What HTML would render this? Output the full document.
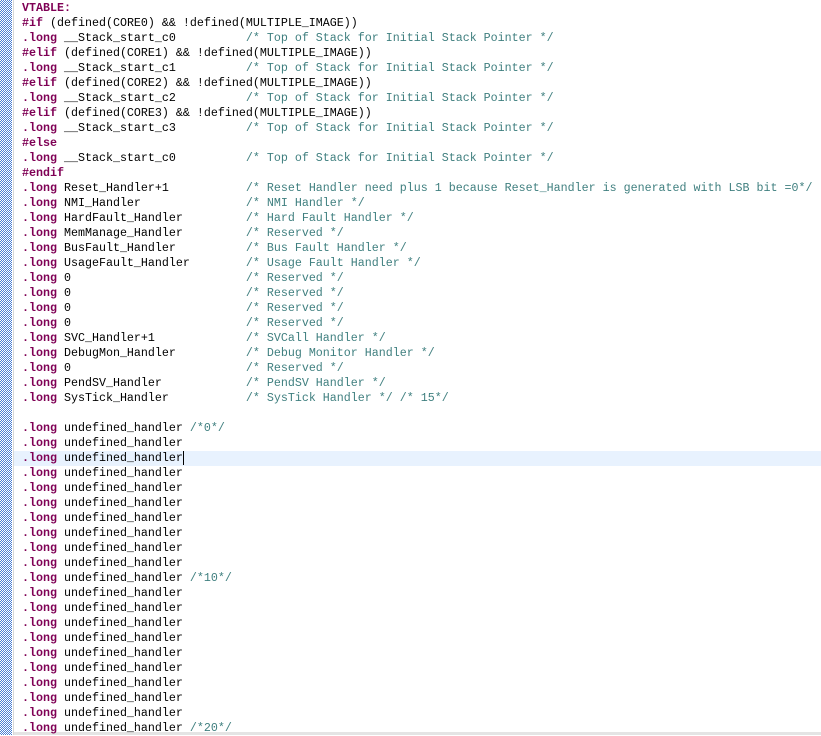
<!DOCTYPE html>
<html><head><meta charset="utf-8"><style>
html,body{margin:0;padding:0;background:#fff;width:821px;height:735px;overflow:hidden}
.g{position:absolute;left:0;top:0;width:12px;height:735px;
background-image:repeating-conic-gradient(#4a7fd4 0 25%,#fff 0 50%);background-size:2px 2px;}
.gl{position:absolute;left:13px;top:0;width:1px;height:735px;background:#d8d8d8}
.hl{position:absolute;left:14px;top:451px;width:807px;height:15px;background:#e8f2fe}
.bt{position:absolute;left:14px;top:732px;width:807px;height:3px;background:#e4e4e4}
pre{position:absolute;left:22px;top:1px;margin:0;font-family:"Liberation Mono",monospace;font-size:11.67px;line-height:15px;color:#000}
.k{color:#7f0055;font-weight:bold}
.c{color:#3f7f7f}
.cur{display:inline-block;width:1px;height:14px;background:#000;vertical-align:top}
</style></head><body>
<div class="g"></div><div class="gl"></div><div class="hl"></div><div class="bt"></div>
<pre><span class="k">VTABLE:</span>
<span class="k">#if</span> (defined(CORE0) &amp;&amp; !defined(MULTIPLE_IMAGE))
<span class="k">.long</span> __Stack_start_c0          <span class="c">/* Top of Stack for Initial Stack Pointer */</span>
<span class="k">#elif</span> (defined(CORE1) &amp;&amp; !defined(MULTIPLE_IMAGE))
<span class="k">.long</span> __Stack_start_c1          <span class="c">/* Top of Stack for Initial Stack Pointer */</span>
<span class="k">#elif</span> (defined(CORE2) &amp;&amp; !defined(MULTIPLE_IMAGE))
<span class="k">.long</span> __Stack_start_c2          <span class="c">/* Top of Stack for Initial Stack Pointer */</span>
<span class="k">#elif</span> (defined(CORE3) &amp;&amp; !defined(MULTIPLE_IMAGE))
<span class="k">.long</span> __Stack_start_c3          <span class="c">/* Top of Stack for Initial Stack Pointer */</span>
<span class="k">#else</span>
<span class="k">.long</span> __Stack_start_c0          <span class="c">/* Top of Stack for Initial Stack Pointer */</span>
<span class="k">#endif</span>
<span class="k">.long</span> Reset_Handler+1           <span class="c">/* Reset Handler need plus 1 because Reset_Handler is generated with LSB bit =0*/</span>
<span class="k">.long</span> NMI_Handler               <span class="c">/* NMI Handler */</span>
<span class="k">.long</span> HardFault_Handler         <span class="c">/* Hard Fault Handler */</span>
<span class="k">.long</span> MemManage_Handler         <span class="c">/* Reserved */</span>
<span class="k">.long</span> BusFault_Handler          <span class="c">/* Bus Fault Handler */</span>
<span class="k">.long</span> UsageFault_Handler        <span class="c">/* Usage Fault Handler */</span>
<span class="k">.long</span> 0                         <span class="c">/* Reserved */</span>
<span class="k">.long</span> 0                         <span class="c">/* Reserved */</span>
<span class="k">.long</span> 0                         <span class="c">/* Reserved */</span>
<span class="k">.long</span> 0                         <span class="c">/* Reserved */</span>
<span class="k">.long</span> SVC_Handler+1             <span class="c">/* SVCall Handler */</span>
<span class="k">.long</span> DebugMon_Handler          <span class="c">/* Debug Monitor Handler */</span>
<span class="k">.long</span> 0                         <span class="c">/* Reserved */</span>
<span class="k">.long</span> PendSV_Handler            <span class="c">/* PendSV Handler */</span>
<span class="k">.long</span> SysTick_Handler           <span class="c">/* SysTick Handler */ /* 15*/</span>

<span class="k">.long</span> undefined_handler <span class="c">/*0*/</span>
<span class="k">.long</span> undefined_handler
<span class="k">.long</span> undefined_handler<span class="cur"></span>
<span class="k">.long</span> undefined_handler
<span class="k">.long</span> undefined_handler
<span class="k">.long</span> undefined_handler
<span class="k">.long</span> undefined_handler
<span class="k">.long</span> undefined_handler
<span class="k">.long</span> undefined_handler
<span class="k">.long</span> undefined_handler
<span class="k">.long</span> undefined_handler <span class="c">/*10*/</span>
<span class="k">.long</span> undefined_handler
<span class="k">.long</span> undefined_handler
<span class="k">.long</span> undefined_handler
<span class="k">.long</span> undefined_handler
<span class="k">.long</span> undefined_handler
<span class="k">.long</span> undefined_handler
<span class="k">.long</span> undefined_handler
<span class="k">.long</span> undefined_handler
<span class="k">.long</span> undefined_handler
<span class="k">.long</span> undefined_handler <span class="c">/*20*/</span>
</pre>
</body></html>
